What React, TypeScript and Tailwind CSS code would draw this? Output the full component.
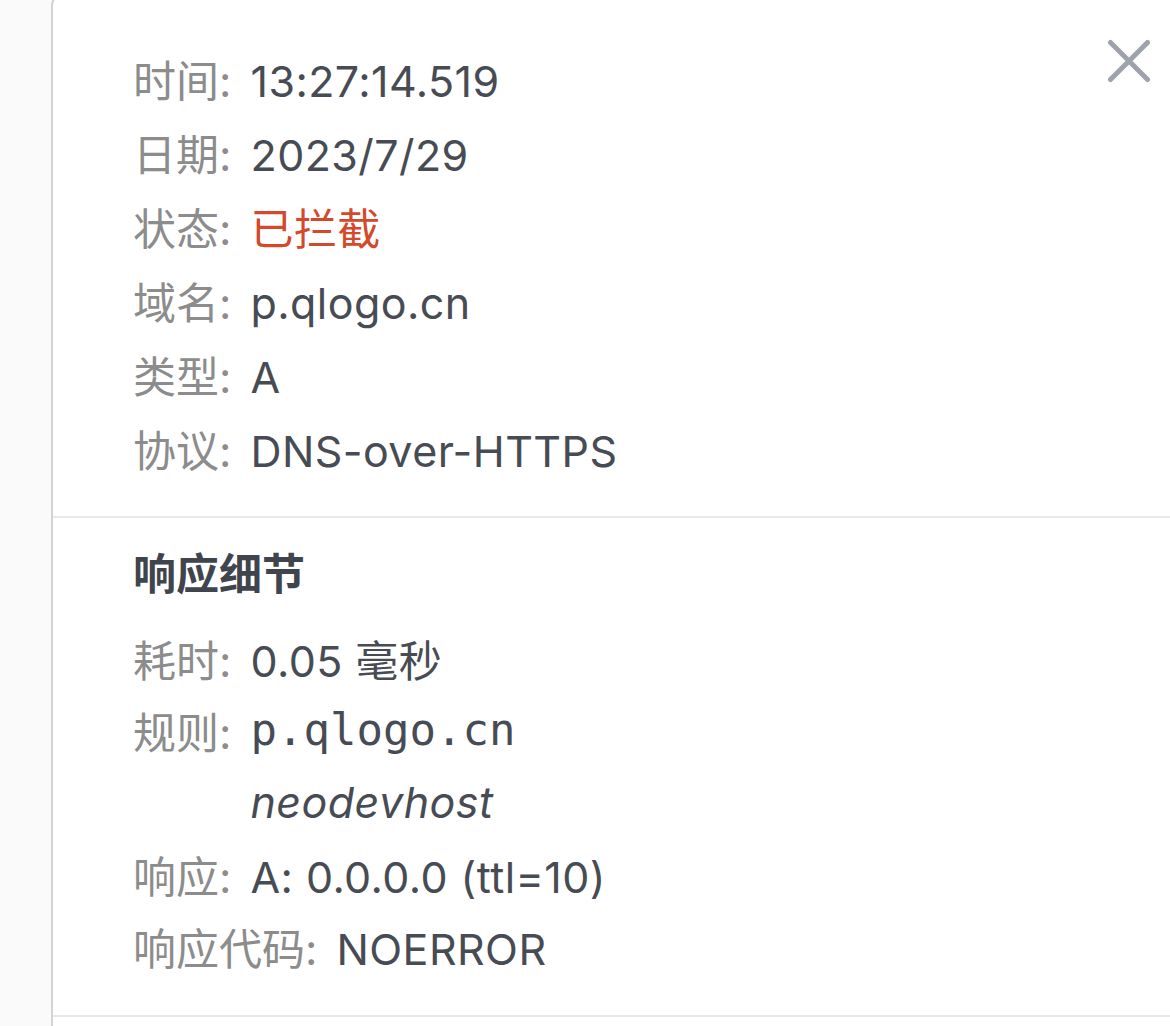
import type { ReactNode } from 'react';

const SANS = "font-['Inter','Noto_Sans_CJK_SC',sans-serif]";

function Row({ label, children, className = '' }: { label: string; children: ReactNode; className?: string }) {
  return (
    <div className={`flex ${className}`}>
      <span className="whitespace-pre pr-[7px] text-[#8c8c8c]">{label}: </span>
      <div className="min-w-0 tracking-[0.01em] text-[#474c54]">{children}</div>
    </div>
  );
}

export default function App() {
  return (
    <div className={`flex h-[1026px] w-[1170px] overflow-hidden bg-[#fafafa] ${SANS}`}>
      <div className="w-[51px] shrink-0" />
      <div className="relative -mt-2 flex-1 rounded-tl-[14px] border-l-2 border-t-2 border-[#d3d3d3] bg-white text-[43px]">
        <button className="absolute right-[18px] top-[45px] text-[#9ea2ab]" aria-label="关闭">
          <svg width="46" height="46" viewBox="0 0 46 46" fill="none" stroke="currentColor" strokeWidth="5" strokeLinecap="round">
            <path d="M4.5 3.5L41.5 40.5M41.5 3.5L4.5 40.5" />
          </svg>
        </button>

        <section className="border-b-2 border-[#e8e8e8] pb-[28px] pl-[80px] pt-[50px] leading-[74px]">
          <Row label="时间">13:27:14.519</Row>
          <Row label="日期">2023/7/29</Row>
          <Row label="状态">
            <span className="text-[#d4482c]">已拦截</span>
          </Row>
          <Row label="域名">p.qlogo.cn</Row>
          <Row label="类型">A</Row>
          <Row label="协议">DNS-over-HTTPS</Row>
        </section>

        <section className="border-b-2 border-[#e8e8e8] pb-[30px] pl-[80px] pt-[19px] leading-[72px]">
          <h3 className="mb-[14px] leading-[74px] font-bold text-[#40454d]">响应细节</h3>
          <Row label="耗时">0.05 毫秒</Row>
          <Row label="规则">
            <div className="font-['DejaVu_Sans_Mono',monospace] text-[44px] tracking-normal leading-[66px]">p.qlogo.cn</div>
            <div className="italic leading-[78px]">neodevhost</div>
          </Row>
          <Row label="响应">A: 0.0.0.0 (ttl=10)</Row>
          <Row label="响应代码">NOERROR</Row>
        </section>
      </div>
    </div>
  );
}
